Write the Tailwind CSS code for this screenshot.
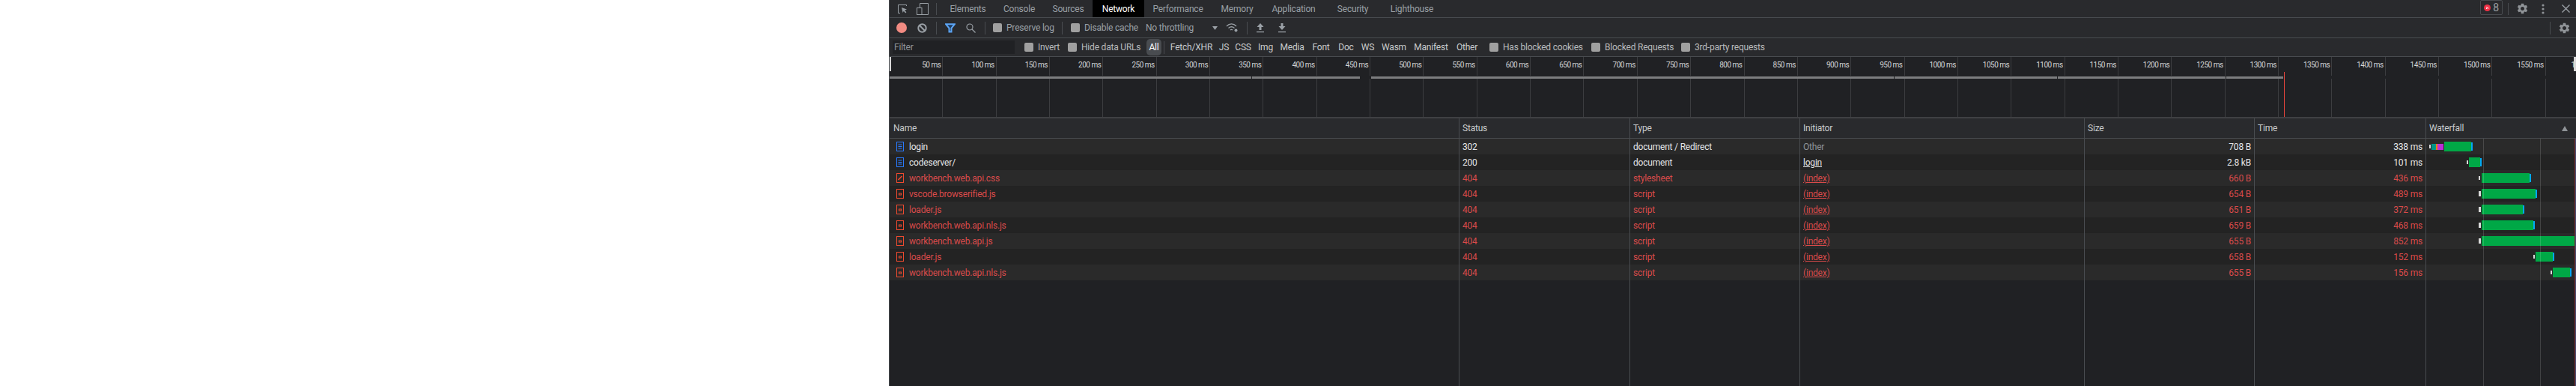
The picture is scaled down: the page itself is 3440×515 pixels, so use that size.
<!DOCTYPE html>
<html lang="en">
<head>
  <meta charset="UTF-8" />
  <title>Network</title>
  <script src="https://cdn.jsdelivr.net/npm/@tailwindcss/browser@4"></script>
</head>
<body class="bg-white h-[515px] w-[3440px] overflow-hidden flex font-[Roboto,sans-serif] text-[12px] leading-[16px] tracking-[-0.2px]">

  <!-- page being inspected -->
  <div class="w-[1187px] shrink-0 bg-white"></div>

  <!-- devtools -->
  <div class="w-[2253px] shrink-0 h-full flex flex-col bg-[#202124] border-l border-[#494c50]">

    <!-- tabs -->
    <div class="h-[24px] shrink-0 flex items-center bg-[#292a2d] border-b border-[#494c50] text-[#9aa0a6]">
      <div class="w-[62px] shrink-0 flex items-center pl-[10px] gap-[12px]">
        <svg class="w-[14px] h-[14px] shrink-0" viewBox="0 0 14 14" fill="none"><path d="M12.5 3V1.5H1.5V12.5H4" stroke="#9aa0a6"/><path d="M6 5l7 2.6-3 1.1 2.4 2.6-1.2 1.1-2.4-2.6L7.6 12z" fill="#9aa0a6"/></svg>
        <svg class="w-[16px] h-[16px] shrink-0" viewBox="0 0 16 16" fill="none"><path d="M4.5 6.5V.5H15.5V15.5H7" stroke="#9aa0a6"/><rect x=".5" y="6.5" width="6.5" height="9" stroke="#9aa0a6"/></svg>
      </div>
      <div class="w-px h-[16px] bg-[#494c50] shrink-0"></div>
      <div class="w-[6px] shrink-0"></div>
      <div class="w-[71px] text-center">Elements</div>
      <div class="w-[66px] text-center">Console</div>
      <div class="w-[65px] text-center">Sources</div>
      <div class="w-[69px] h-full flex items-center justify-center bg-black text-white">Network</div>
      <div class="w-[90px] text-center">Performance</div>
      <div class="w-[68px] text-center">Memory</div>
      <div class="w-[83px] text-center">Application</div>
      <div class="w-[75px] text-center">Security</div>
      <div class="w-[83px] text-center">Lighthouse</div>
      <div class="flex-1"></div>
      <div class="w-[30px] h-[20px] mt-[-3px] mr-[7px] border border-[#494c50] rounded-[2px] flex items-center justify-center gap-[3px] text-[14px]">
        <svg class="w-[9px] h-[9px]" viewBox="0 0 9 9"><circle cx="4.5" cy="4.5" r="4.5" fill="#ee3146"/><path d="M3 3l3 3M6 3L3 6" stroke="#fff"/></svg>
        <span>8</span>
      </div>
      <div class="w-px h-[16px] bg-[#494c50] shrink-0"></div>
      <div class="w-[30px] flex justify-center pl-[6px]">
        <svg class="w-[17px] h-[17px]" viewBox="0 0 24 24" fill="#8f9397"><path d="M19.14 12.94c.04-.3.06-.61.06-.94 0-.32-.02-.64-.07-.94l2.03-1.58a.49.49 0 0 0 .12-.61l-1.92-3.32a.488.488 0 0 0-.59-.22l-2.39.96c-.5-.38-1.03-.7-1.62-.94l-.36-2.54a.484.484 0 0 0-.48-.41h-3.84c-.24 0-.43.17-.47.41l-.36 2.54c-.59.24-1.13.57-1.62.94l-2.39-.96c-.22-.08-.47 0-.59.22L2.74 8.87c-.12.21-.08.47.12.61l2.03 1.58c-.05.3-.09.63-.09.94s.02.64.07.94l-2.03 1.58a.49.49 0 0 0-.12.61l1.92 3.32c.12.22.37.29.59.22l2.39-.96c.5.38 1.03.7 1.62.94l.36 2.54c.05.24.24.41.48.41h3.84c.24 0 .44-.17.47-.41l.36-2.54c.59-.24 1.13-.56 1.62-.94l2.39.96c.22.08.47 0 .59-.22l1.92-3.32c.12-.22.07-.47-.12-.61l-2.01-1.58zM12 15.6c-1.98 0-3.6-1.62-3.6-3.6s1.62-3.6 3.6-3.6 3.6 1.62 3.6 3.6-1.62 3.6-3.6 3.6z"/></svg>
      </div>
      <div class="w-[32px] flex justify-center">
        <svg class="w-[4px] h-[14px]" viewBox="0 0 4 14" fill="#8f9397"><circle cx="2" cy="2" r="1.6"/><circle cx="2" cy="7" r="1.6"/><circle cx="2" cy="12" r="1.6"/></svg>
      </div>
      <div class="w-[28px] flex justify-center">
        <svg class="w-[11px] h-[11px]" viewBox="0 0 11 11" stroke="#9aa0a6" stroke-width="1.4"><path d="M.5.5l10 10M10.5.5l-10 10"/></svg>
      </div>
    </div>

    <!-- network toolbar -->
    <div class="h-[27px] shrink-0 flex items-center bg-[#292a2d] border-b border-[#494c50] text-[#9aa0a6]">
      <div class="w-[62px] shrink-0 flex items-center pl-[9px] gap-[14px]">
        <span class="w-[14px] h-[14px] rounded-full bg-[#f28b82] shrink-0"></span>
        <svg class="w-[13px] h-[13px] shrink-0" viewBox="0 0 13 13" fill="none" stroke="#9aa0a6" stroke-width="2"><circle cx="6.5" cy="6.5" r="5.2"/><path d="M2.8 2.8l7.4 7.4"/></svg>
      </div>
      <div class="w-px h-[17px] bg-[#494c50] shrink-0"></div>
      <div class="w-[64px] shrink-0 flex items-center pl-[11px] gap-[14px]">
        <svg class="w-[14px] h-[13px] shrink-0" viewBox="0 0 14 13" fill="#1f3a5c" stroke="#5ca5f5" stroke-width="2"><path d="M1 1.2h12L8.5 6.5v5h-3v-5z"/></svg>
        <svg class="w-[13px] h-[13px] shrink-0" viewBox="0 0 13 13" fill="none" stroke="#9aa0a6" stroke-width="1.2"><circle cx="5" cy="5" r="4"/><path d="M8 8l4.5 4.5"/></svg>
      </div>
      <div class="w-px h-[17px] bg-[#494c50] shrink-0"></div>
      <div class="w-[102px] shrink-0 flex items-center pl-[10px] gap-[6px] whitespace-nowrap">
        <span class="w-[12px] h-[12px] rounded-[2px] bg-[#a0a0a0] shrink-0"></span>Preserve log
      </div>
      <div class="w-px h-[17px] bg-[#494c50] shrink-0"></div>
      <div class="w-[111px] shrink-0 flex items-center pl-[11px] gap-[6px] whitespace-nowrap">
        <span class="w-[12px] h-[12px] rounded-[2px] bg-[#a0a0a0] shrink-0"></span>Disable cache
      </div>
      <div class="w-[89px] shrink-0 whitespace-nowrap">No throttling</div>
      <svg class="w-[7px] h-[5px] shrink-0" viewBox="0 0 7 5" fill="#9aa0a6"><path d="M0 0h7L3.5 5z"/></svg>
      <div class="w-[39px] shrink-0 flex justify-center">
        <svg class="w-[17px] h-[14px]" viewBox="0 0 17 14" fill="none" stroke="#9aa0a6" stroke-width="1.4"><path d="M1 5c4-4 9-4 13 0M3.5 7.5c3-2.5 5-2.5 8 0M6 10c1-.8 2-.8 3 0"/><circle cx="13.5" cy="10.5" r="2" fill="#9aa0a6" stroke="none"/></svg>
      </div>
      <div class="w-px h-[17px] bg-[#494c50] shrink-0"></div>
      <div class="w-[12px] shrink-0"></div>
      <svg class="w-[10px] h-[14px] shrink-0" viewBox="0 0 10 14" fill="#9aa0a6"><path d="M5 1l4.5 5H6.5v4h-3V6H.5zM0 12h10v1.2H0z"/></svg>
      <div class="w-[19px] shrink-0"></div>
      <svg class="w-[10px] h-[14px] shrink-0" viewBox="0 0 10 14" fill="#9aa0a6"><path d="M3.5 1h3v4h3L5 10 .5 5h3zM0 12h10v1.2H0z"/></svg>
      <div class="flex-1"></div>
      <div class="w-px h-[17px] bg-[#494c50] shrink-0"></div>
      <div class="w-[34px] flex justify-center pl-[2px]">
        <svg class="w-[17px] h-[17px]" viewBox="0 0 24 24" fill="#8f9397"><path d="M19.14 12.94c.04-.3.06-.61.06-.94 0-.32-.02-.64-.07-.94l2.03-1.58a.49.49 0 0 0 .12-.61l-1.92-3.32a.488.488 0 0 0-.59-.22l-2.39.96c-.5-.38-1.03-.7-1.62-.94l-.36-2.54a.484.484 0 0 0-.48-.41h-3.84c-.24 0-.43.17-.47.41l-.36 2.54c-.59.24-1.13.57-1.62.94l-2.39-.96c-.22-.08-.47 0-.59.22L2.74 8.87c-.12.21-.08.47.12.61l2.03 1.58c-.05.3-.09.63-.09.94s.02.64.07.94l-2.03 1.58a.49.49 0 0 0-.12.61l1.92 3.32c.12.22.37.29.59.22l2.39-.96c.5.38 1.03.7 1.62.94l.36 2.54c.05.24.24.41.48.41h3.84c.24 0 .44-.17.47-.41l.36-2.54c.59-.24 1.13-.56 1.62-.94l2.39.96c.22.08.47 0 .59-.22l1.92-3.32c.12-.22.07-.47-.12-.61l-2.01-1.58zM12 15.6c-1.98 0-3.6-1.62-3.6-3.6s1.62-3.6 3.6-3.6 3.6 1.62 3.6 3.6-1.62 3.6-3.6 3.6z"/></svg>
      </div>
    </div>

    <!-- filter bar -->
    <div class="h-[25px] shrink-0 flex items-center bg-[#292a2d] border-b border-[#494c50] text-[#c8cacc] whitespace-nowrap">
      <div class="ml-[4px] w-[163px] h-[18px] shrink-0 bg-[#202124] text-[#8f9397] pl-[2px] flex items-center">Filter</div>
      <div class="w-[80px] shrink-0 ml-[13px] flex items-center gap-[6px] text-[#b8babc]"><span class="w-[12px] h-[12px] rounded-[2px] bg-[#a0a0a0] shrink-0"></span>Invert</div>
      <div class="w-[105px] shrink-0 ml-[-22px] flex items-center gap-[6px] text-[#b8babc]"><span class="w-[12px] h-[12px] rounded-[2px] bg-[#a0a0a0] shrink-0"></span>Hide data URLs</div>
      <div class="w-[20px] h-[22px] shrink-0 flex items-center justify-center rounded-[5px] bg-[#494c50] text-white">All</div>
      <div class="w-[3px] shrink-0"></div>
      <div class="w-px h-[17px] bg-[#494c50] shrink-0"></div>
      <div class="w-[3px] shrink-0"></div>
      <div class="w-[66px] text-center shrink-0">Fetch/XHR</div>
      <div class="w-[21px] text-center shrink-0">JS</div>
      <div class="w-[30px] text-center shrink-0">CSS</div>
      <div class="w-[30px] text-center shrink-0">Img</div>
      <div class="w-[41px] text-center shrink-0">Media</div>
      <div class="w-[36px] text-center shrink-0">Font</div>
      <div class="w-[31px] text-center shrink-0">Doc</div>
      <div class="w-[27px] text-center shrink-0">WS</div>
      <div class="w-[43px] text-center shrink-0">Wasm</div>
      <div class="w-[56px] text-center shrink-0">Manifest</div>
      <div class="w-[40px] text-center shrink-0">Other</div>
      <div class="w-[136px] shrink-0 ml-[10px] flex items-center gap-[6px] text-[#b8babc]"><span class="w-[12px] h-[12px] rounded-[2px] bg-[#a0a0a0] shrink-0"></span>Has blocked cookies</div>
      <div class="w-[120px] shrink-0 flex items-center gap-[6px] text-[#b8babc]"><span class="w-[12px] h-[12px] rounded-[2px] bg-[#a0a0a0] shrink-0"></span>Blocked Requests</div>
      <div class="w-[120px] shrink-0 flex items-center gap-[6px] text-[#b8babc]"><span class="w-[12px] h-[12px] rounded-[2px] bg-[#a0a0a0] shrink-0"></span>3rd-party requests</div>
    </div>

    <!-- overview -->
    <div class="relative h-[82px] shrink-0 flex flex-col border-b-2 border-[#3f4043] overflow-hidden">
      <div class="h-[25px] shrink-0 flex text-[10px] tracking-[-0.5px] text-[#d4d6d8] whitespace-nowrap">
        <div class="w-[71.35px] shrink-0 border-r border-[#3c3d40] text-right pr-[2px] pt-[3px]">50 ms</div>
        <div class="w-[71.35px] shrink-0 border-r border-[#3c3d40] text-right pr-[2px] pt-[3px]">100 ms</div>
        <div class="w-[71.35px] shrink-0 border-r border-[#3c3d40] text-right pr-[2px] pt-[3px]">150 ms</div>
        <div class="w-[71.35px] shrink-0 border-r border-[#3c3d40] text-right pr-[2px] pt-[3px]">200 ms</div>
        <div class="w-[71.35px] shrink-0 border-r border-[#3c3d40] text-right pr-[2px] pt-[3px]">250 ms</div>
        <div class="w-[71.35px] shrink-0 border-r border-[#3c3d40] text-right pr-[2px] pt-[3px]">300 ms</div>
        <div class="w-[71.35px] shrink-0 border-r border-[#3c3d40] text-right pr-[2px] pt-[3px]">350 ms</div>
        <div class="w-[71.35px] shrink-0 border-r border-[#3c3d40] text-right pr-[2px] pt-[3px]">400 ms</div>
        <div class="w-[71.35px] shrink-0 border-r border-[#3c3d40] text-right pr-[2px] pt-[3px]">450 ms</div>
        <div class="w-[71.35px] shrink-0 border-r border-[#3c3d40] text-right pr-[2px] pt-[3px]">500 ms</div>
        <div class="w-[71.35px] shrink-0 border-r border-[#3c3d40] text-right pr-[2px] pt-[3px]">550 ms</div>
        <div class="w-[71.35px] shrink-0 border-r border-[#3c3d40] text-right pr-[2px] pt-[3px]">600 ms</div>
        <div class="w-[71.35px] shrink-0 border-r border-[#3c3d40] text-right pr-[2px] pt-[3px]">650 ms</div>
        <div class="w-[71.35px] shrink-0 border-r border-[#3c3d40] text-right pr-[2px] pt-[3px]">700 ms</div>
        <div class="w-[71.35px] shrink-0 border-r border-[#3c3d40] text-right pr-[2px] pt-[3px]">750 ms</div>
        <div class="w-[71.35px] shrink-0 border-r border-[#3c3d40] text-right pr-[2px] pt-[3px]">800 ms</div>
        <div class="w-[71.35px] shrink-0 border-r border-[#3c3d40] text-right pr-[2px] pt-[3px]">850 ms</div>
        <div class="w-[71.35px] shrink-0 border-r border-[#3c3d40] text-right pr-[2px] pt-[3px]">900 ms</div>
        <div class="w-[71.35px] shrink-0 border-r border-[#3c3d40] text-right pr-[2px] pt-[3px]">950 ms</div>
        <div class="w-[71.35px] shrink-0 border-r border-[#3c3d40] text-right pr-[2px] pt-[3px]">1000 ms</div>
        <div class="w-[71.35px] shrink-0 border-r border-[#3c3d40] text-right pr-[2px] pt-[3px]">1050 ms</div>
        <div class="w-[71.35px] shrink-0 border-r border-[#3c3d40] text-right pr-[2px] pt-[3px]">1100 ms</div>
        <div class="w-[71.35px] shrink-0 border-r border-[#3c3d40] text-right pr-[2px] pt-[3px]">1150 ms</div>
        <div class="w-[71.35px] shrink-0 border-r border-[#3c3d40] text-right pr-[2px] pt-[3px]">1200 ms</div>
        <div class="w-[71.35px] shrink-0 border-r border-[#3c3d40] text-right pr-[2px] pt-[3px]">1250 ms</div>
        <div class="w-[71.35px] shrink-0 border-r border-[#3c3d40] text-right pr-[2px] pt-[3px]">1300 ms</div>
        <div class="w-[71.35px] shrink-0 border-r border-[#3c3d40] text-right pr-[2px] pt-[3px]">1350 ms</div>
        <div class="w-[71.35px] shrink-0 border-r border-[#3c3d40] text-right pr-[2px] pt-[3px]">1400 ms</div>
        <div class="w-[71.35px] shrink-0 border-r border-[#3c3d40] text-right pr-[2px] pt-[3px]">1450 ms</div>
        <div class="w-[71.35px] shrink-0 border-r border-[#3c3d40] text-right pr-[2px] pt-[3px]">1500 ms</div>
        <div class="w-[71.35px] shrink-0 border-r border-[#3c3d40] text-right pr-[2px] pt-[3px]">1550 ms</div>
        <div class="w-[71.35px] shrink-0 text-right pr-[2px] pt-[3px]">1600 ms</div>
      </div>
      <div class="h-[4px] shrink-0 flex items-center">
        <div class="w-[483px] h-[3px] bg-[#7c7d7f] shrink-0"></div>
        <div class="w-[144px] h-[3px] ml-px bg-[#7c7d7f] shrink-0"></div>
        <div class="w-[698px] h-[3px] ml-[15px] bg-[#7c7d7f] shrink-0"></div>
        <div class="w-[217px] h-[3px] ml-px bg-[#7c7d7f] shrink-0"></div>
        <div class="w-[224px] h-[3px] ml-px bg-[#7c7d7f] shrink-0"></div>
        <div class="w-[76px] h-[3px] ml-px bg-[#7c7d7f] shrink-0"></div>
      </div>
      <div class="flex-1 flex">
        <div class="w-[71.35px] shrink-0 border-r border-[#3c3d40]"></div>
        <div class="w-[71.35px] shrink-0 border-r border-[#3c3d40]"></div>
        <div class="w-[71.35px] shrink-0 border-r border-[#3c3d40]"></div>
        <div class="w-[71.35px] shrink-0 border-r border-[#3c3d40]"></div>
        <div class="w-[71.35px] shrink-0 border-r border-[#3c3d40]"></div>
        <div class="w-[71.35px] shrink-0 border-r border-[#3c3d40]"></div>
        <div class="w-[71.35px] shrink-0 border-r border-[#3c3d40]"></div>
        <div class="w-[71.35px] shrink-0 border-r border-[#3c3d40]"></div>
        <div class="w-[71.35px] shrink-0 border-r border-[#3c3d40]"></div>
        <div class="w-[71.35px] shrink-0 border-r border-[#3c3d40]"></div>
        <div class="w-[71.35px] shrink-0 border-r border-[#3c3d40]"></div>
        <div class="w-[71.35px] shrink-0 border-r border-[#3c3d40]"></div>
        <div class="w-[71.35px] shrink-0 border-r border-[#3c3d40]"></div>
        <div class="w-[71.35px] shrink-0 border-r border-[#3c3d40]"></div>
        <div class="w-[71.35px] shrink-0 border-r border-[#3c3d40]"></div>
        <div class="w-[71.35px] shrink-0 border-r border-[#3c3d40]"></div>
        <div class="w-[71.35px] shrink-0 border-r border-[#3c3d40]"></div>
        <div class="w-[71.35px] shrink-0 border-r border-[#3c3d40]"></div>
        <div class="w-[71.35px] shrink-0 border-r border-[#3c3d40]"></div>
        <div class="w-[71.35px] shrink-0 border-r border-[#3c3d40]"></div>
        <div class="w-[71.35px] shrink-0 border-r border-[#3c3d40]"></div>
        <div class="w-[71.35px] shrink-0 border-r border-[#3c3d40]"></div>
        <div class="w-[71.35px] shrink-0 border-r border-[#3c3d40]"></div>
        <div class="w-[71.35px] shrink-0 border-r border-[#3c3d40]"></div>
        <div class="w-[71.35px] shrink-0 border-r border-[#3c3d40]"></div>
        <div class="w-[71.35px] shrink-0 border-r border-[#3c3d40]"></div>
        <div class="w-[71.35px] shrink-0 border-r border-[#3c3d40]"></div>
        <div class="w-[71.35px] shrink-0 border-r border-[#3c3d40]"></div>
        <div class="w-[71.35px] shrink-0 border-r border-[#3c3d40]"></div>
        <div class="w-[71.35px] shrink-0 border-r border-[#3c3d40]"></div>
        <div class="w-[71.35px] shrink-0 border-r border-[#3c3d40]"></div>
      </div>
      <!-- load line and drag handles -->
      <div class="absolute left-[1862px] top-[20px] bottom-0 w-px bg-[#e8453c]"></div>
      <div class="absolute left-0 top-0 w-[2px] h-[19px] bg-[#d8d8d8]"></div>
      <div class="absolute right-0 top-0 w-[3px] h-[19px] bg-[#d8d8d8]"></div>
    </div>

    <!-- request table -->
    <div class="relative flex-1 flex flex-col min-h-0 text-[#e3e5e8]">
      <div class="h-[27px] shrink-0 grid grid-cols-[761px_228px_227px_380px_227px_229px_200px] bg-[#292a2d] border-b border-[#494c50] text-[#c8cacc] items-stretch">
        <div class="border-r border-[#494c50] pl-[5px] flex items-center">Name</div>
        <div class="border-r border-[#494c50] pl-[4px] flex items-center">Status</div>
        <div class="border-r border-[#494c50] pl-[4px] flex items-center">Type</div>
        <div class="border-r border-[#494c50] pl-[4px] flex items-center">Initiator</div>
        <div class="border-r border-[#494c50] pl-[4px] flex items-center">Size</div>
        <div class="border-r border-[#494c50] pl-[4px] flex items-center">Time</div>
        <div class="pl-[4px] flex items-center justify-between pr-[11px]">Waterfall
          <svg class="w-[8px] h-[7px]" viewBox="0 0 8 7" fill="#8f9397"><path d="M4 0l4 7H0z"/></svg>
        </div>
      </div>

      <div class="h-[21px] shrink-0 grid grid-cols-[761px_228px_227px_380px_227px_229px_200px] bg-[#2a2a2a]">
        <div class="border-r border-[#494c50] pl-[9px] flex items-center gap-[7px]"><svg class="w-[10px] h-[13px]" viewBox="0 0 10 13" fill="none" stroke="#2979ff"><rect x=".5" y=".5" width="9" height="12"/><path d="M2.5 4h5M2.5 6.5h5M2.5 9h5"/></svg>login</div>
        <div class="border-r border-[#494c50] pl-[4px] flex items-center">302</div>
        <div class="border-r border-[#494c50] pl-[4px] flex items-center">document / Redirect</div>
        <div class="border-r border-[#494c50] pl-[4px] flex items-center text-[#8f9397]">Other</div>
        <div class="border-r border-[#494c50] pr-[4px] flex items-center justify-end">708 B</div>
        <div class="border-r border-[#494c50] pr-[4px] flex items-center justify-end">338 ms</div>
        <div class="flex items-center"><span class="ml-[4px] w-[2px] h-[5px] bg-[#d8d8d8]"></span><span class="ml-px w-[6px] h-[8px] bg-[#009688]"></span><span class="w-[2px] h-[8px] bg-[#f57c00]"></span><span class="w-[8px] h-[8px] bg-[#b92ed6]"></span><span class="ml-px w-[36px] h-[13px] bg-[#00a846]"></span><span class="w-[2px] h-[11px] bg-[#03a9f4]"></span></div>
      </div>
      <div class="h-[21px] shrink-0 grid grid-cols-[761px_228px_227px_380px_227px_229px_200px] bg-[#232323]">
        <div class="border-r border-[#494c50] pl-[9px] flex items-center gap-[7px]"><svg class="w-[10px] h-[13px]" viewBox="0 0 10 13" fill="none" stroke="#2979ff"><rect x=".5" y=".5" width="9" height="12"/><path d="M2.5 4h5M2.5 6.5h5M2.5 9h5"/></svg>codeserver/</div>
        <div class="border-r border-[#494c50] pl-[4px] flex items-center">200</div>
        <div class="border-r border-[#494c50] pl-[4px] flex items-center">document</div>
        <div class="border-r border-[#494c50] pl-[4px] flex items-center underline">login</div>
        <div class="border-r border-[#494c50] pr-[4px] flex items-center justify-end">2.8 kB</div>
        <div class="border-r border-[#494c50] pr-[4px] flex items-center justify-end">101 ms</div>
        <div class="flex items-center"><span class="ml-[54px] w-[2px] h-[5px] bg-[#d8d8d8]"></span><span class="ml-px w-[15px] h-[13px] bg-[#00a846]"></span><span class="w-[2px] h-[11px] bg-[#03a9f4]"></span></div>
      </div>
      <div class="h-[21px] shrink-0 grid grid-cols-[761px_228px_227px_380px_227px_229px_200px] bg-[#2a2a2a] text-[#d94a4a]">
        <div class="border-r border-[#494c50] pl-[9px] flex items-center gap-[7px]"><svg class="w-[10px] h-[13px]" viewBox="0 0 10 13" fill="none" stroke="#ef4a2f"><rect x=".5" y=".5" width="9" height="12"/><path d="M2.5 9l5-5" stroke-width="1.6"/></svg>workbench.web.api.css</div>
        <div class="border-r border-[#494c50] pl-[4px] flex items-center">404</div>
        <div class="border-r border-[#494c50] pl-[4px] flex items-center">stylesheet</div>
        <div class="border-r border-[#494c50] pl-[4px] flex items-center underline">(index)</div>
        <div class="border-r border-[#494c50] pr-[4px] flex items-center justify-end">660 B</div>
        <div class="border-r border-[#494c50] pr-[4px] flex items-center justify-end">436 ms</div>
        <div class="flex items-center"><span class="ml-[70px] w-[2px] h-[5px] bg-[#d8d8d8]"></span><span class="ml-[2px] w-[64px] h-[13px] bg-[#00a846]"></span><span class="w-[2px] h-[11px] bg-[#03a9f4]"></span></div>
      </div>
      <div class="h-[21px] shrink-0 grid grid-cols-[761px_228px_227px_380px_227px_229px_200px] bg-[#232323] text-[#d94a4a]">
        <div class="border-r border-[#494c50] pl-[9px] flex items-center gap-[7px]"><svg class="w-[10px] h-[13px]" viewBox="0 0 10 13" fill="none" stroke="#ef4a2f"><rect x=".5" y=".5" width="9" height="12"/><rect x="3.5" y="6" width="3" height="2"/></svg>vscode.browserified.js</div>
        <div class="border-r border-[#494c50] pl-[4px] flex items-center">404</div>
        <div class="border-r border-[#494c50] pl-[4px] flex items-center">script</div>
        <div class="border-r border-[#494c50] pl-[4px] flex items-center underline">(index)</div>
        <div class="border-r border-[#494c50] pr-[4px] flex items-center justify-end">654 B</div>
        <div class="border-r border-[#494c50] pr-[4px] flex items-center justify-end">489 ms</div>
        <div class="flex items-center"><span class="ml-[70px] w-[3px] h-[7px] bg-[#d8d8d8]"></span><span class="ml-px w-[72px] h-[13px] bg-[#00a846]"></span><span class="w-[2px] h-[11px] bg-[#03a9f4]"></span></div>
      </div>
      <div class="h-[21px] shrink-0 grid grid-cols-[761px_228px_227px_380px_227px_229px_200px] bg-[#2a2a2a] text-[#d94a4a]">
        <div class="border-r border-[#494c50] pl-[9px] flex items-center gap-[7px]"><svg class="w-[10px] h-[13px]" viewBox="0 0 10 13" fill="none" stroke="#ef4a2f"><rect x=".5" y=".5" width="9" height="12"/><rect x="3.5" y="6" width="3" height="2"/></svg>loader.js</div>
        <div class="border-r border-[#494c50] pl-[4px] flex items-center">404</div>
        <div class="border-r border-[#494c50] pl-[4px] flex items-center">script</div>
        <div class="border-r border-[#494c50] pl-[4px] flex items-center underline">(index)</div>
        <div class="border-r border-[#494c50] pr-[4px] flex items-center justify-end">651 B</div>
        <div class="border-r border-[#494c50] pr-[4px] flex items-center justify-end">372 ms</div>
        <div class="flex items-center"><span class="ml-[70px] w-[3px] h-[7px] bg-[#d8d8d8]"></span><span class="ml-px w-[55px] h-[13px] bg-[#00a846]"></span><span class="w-[2px] h-[11px] bg-[#03a9f4]"></span></div>
      </div>
      <div class="h-[21px] shrink-0 grid grid-cols-[761px_228px_227px_380px_227px_229px_200px] bg-[#232323] text-[#d94a4a]">
        <div class="border-r border-[#494c50] pl-[9px] flex items-center gap-[7px]"><svg class="w-[10px] h-[13px]" viewBox="0 0 10 13" fill="none" stroke="#ef4a2f"><rect x=".5" y=".5" width="9" height="12"/><rect x="3.5" y="6" width="3" height="2"/></svg>workbench.web.api.nls.js</div>
        <div class="border-r border-[#494c50] pl-[4px] flex items-center">404</div>
        <div class="border-r border-[#494c50] pl-[4px] flex items-center">script</div>
        <div class="border-r border-[#494c50] pl-[4px] flex items-center underline">(index)</div>
        <div class="border-r border-[#494c50] pr-[4px] flex items-center justify-end">659 B</div>
        <div class="border-r border-[#494c50] pr-[4px] flex items-center justify-end">468 ms</div>
        <div class="flex items-center"><span class="ml-[70px] w-[3px] h-[7px] bg-[#d8d8d8]"></span><span class="ml-px w-[69px] h-[13px] bg-[#00a846]"></span><span class="w-[2px] h-[11px] bg-[#03a9f4]"></span></div>
      </div>
      <div class="h-[21px] shrink-0 grid grid-cols-[761px_228px_227px_380px_227px_229px_200px] bg-[#2a2a2a] text-[#d94a4a]">
        <div class="border-r border-[#494c50] pl-[9px] flex items-center gap-[7px]"><svg class="w-[10px] h-[13px]" viewBox="0 0 10 13" fill="none" stroke="#ef4a2f"><rect x=".5" y=".5" width="9" height="12"/><rect x="3.5" y="6" width="3" height="2"/></svg>workbench.web.api.js</div>
        <div class="border-r border-[#494c50] pl-[4px] flex items-center">404</div>
        <div class="border-r border-[#494c50] pl-[4px] flex items-center">script</div>
        <div class="border-r border-[#494c50] pl-[4px] flex items-center underline">(index)</div>
        <div class="border-r border-[#494c50] pr-[4px] flex items-center justify-end">655 B</div>
        <div class="border-r border-[#494c50] pr-[4px] flex items-center justify-end">852 ms</div>
        <div class="flex items-center"><span class="ml-[70px] w-[3px] h-[7px] bg-[#d8d8d8]"></span><span class="ml-px w-[124px] h-[13px] bg-[#00a846]"></span></div>
      </div>
      <div class="h-[21px] shrink-0 grid grid-cols-[761px_228px_227px_380px_227px_229px_200px] bg-[#232323] text-[#d94a4a]">
        <div class="border-r border-[#494c50] pl-[9px] flex items-center gap-[7px]"><svg class="w-[10px] h-[13px]" viewBox="0 0 10 13" fill="none" stroke="#ef4a2f"><rect x=".5" y=".5" width="9" height="12"/><rect x="3.5" y="6" width="3" height="2"/></svg>loader.js</div>
        <div class="border-r border-[#494c50] pl-[4px] flex items-center">404</div>
        <div class="border-r border-[#494c50] pl-[4px] flex items-center">script</div>
        <div class="border-r border-[#494c50] pl-[4px] flex items-center underline">(index)</div>
        <div class="border-r border-[#494c50] pr-[4px] flex items-center justify-end">658 B</div>
        <div class="border-r border-[#494c50] pr-[4px] flex items-center justify-end">152 ms</div>
        <div class="flex items-center"><span class="ml-[143px] w-[2px] h-[5px] bg-[#d8d8d8]"></span><span class="ml-px w-[23px] h-[13px] bg-[#00a846]"></span><span class="w-[2px] h-[11px] bg-[#03a9f4]"></span></div>
      </div>
      <div class="h-[21px] shrink-0 grid grid-cols-[761px_228px_227px_380px_227px_229px_200px] bg-[#2a2a2a] text-[#d94a4a]">
        <div class="border-r border-[#494c50] pl-[9px] flex items-center gap-[7px]"><svg class="w-[10px] h-[13px]" viewBox="0 0 10 13" fill="none" stroke="#ef4a2f"><rect x=".5" y=".5" width="9" height="12"/><rect x="3.5" y="6" width="3" height="2"/></svg>workbench.web.api.nls.js</div>
        <div class="border-r border-[#494c50] pl-[4px] flex items-center">404</div>
        <div class="border-r border-[#494c50] pl-[4px] flex items-center">script</div>
        <div class="border-r border-[#494c50] pl-[4px] flex items-center underline">(index)</div>
        <div class="border-r border-[#494c50] pr-[4px] flex items-center justify-end">655 B</div>
        <div class="border-r border-[#494c50] pr-[4px] flex items-center justify-end">156 ms</div>
        <div class="flex items-center"><span class="ml-[166px] w-[2px] h-[5px] bg-[#d8d8d8]"></span><span class="ml-px w-[23px] h-[13px] bg-[#00a846]"></span><span class="w-[2px] h-[11px] bg-[#03a9f4]"></span></div>
      </div>

      <!-- empty area keeps the column lines -->
      <div class="flex-1 grid grid-cols-[761px_228px_227px_380px_227px_229px_200px]">
        <div class="border-r border-[#494c50]"></div>
        <div class="border-r border-[#494c50]"></div>
        <div class="border-r border-[#494c50]"></div>
        <div class="border-r border-[#494c50]"></div>
        <div class="border-r border-[#494c50]"></div>
        <div class="border-r border-[#494c50]"></div>
        <div></div>
      </div>

      <!-- waterfall time grid and event lines, over the rows -->
      <div class="absolute top-[27px] bottom-0 left-[2128px] w-px bg-white/15"></div>
      <div class="absolute top-[27px] bottom-0 left-[2204px] w-px bg-white/15"></div>
      <div class="absolute top-[27px] bottom-0 right-px w-px bg-[#7a2b2b]"></div>
      <div class="absolute top-[27px] bottom-0 right-0 w-px bg-[#454a70]"></div>
    </div>
  </div>
</body>
</html>
